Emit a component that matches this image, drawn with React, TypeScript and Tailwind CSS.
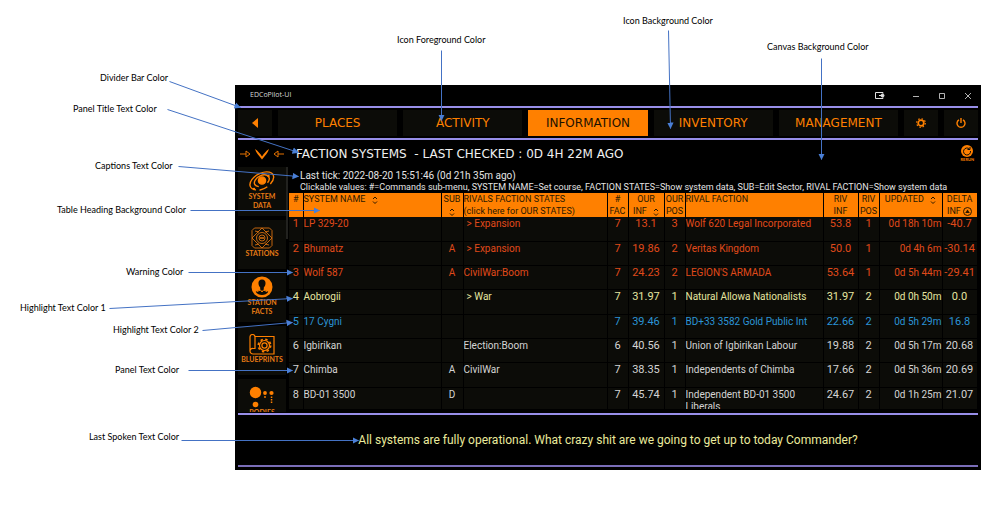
import type { ReactNode } from 'react'
import clsx from 'clsx'

type Tone = 'warning' | 'highlight1' | 'highlight2' | 'panel'

interface FactionSystem {
  name: string
  sub: string
  rivalState: string
  factions: number
  ourInf: string
  ourPos: number
  rival: string
  rivInf: string
  rivPos: number
  updated: string
  delta: string
  tone: Tone
}

const systems: FactionSystem[] = [
  { name: 'LP 329-20', sub: '', rivalState: '> Expansion', factions: 7, ourInf: '13.1', ourPos: 3, rival: 'Wolf 620 Legal Incorporated', rivInf: '53.8', rivPos: 1, updated: '0d 18h 10m', delta: '-40.7', tone: 'warning' },
  { name: 'Bhumatz', sub: 'A', rivalState: '> Expansion', factions: 7, ourInf: '19.86', ourPos: 2, rival: 'Veritas Kingdom', rivInf: '50.0', rivPos: 1, updated: '0d 4h 6m', delta: '-30.14', tone: 'warning' },
  { name: 'Wolf 587', sub: 'A', rivalState: 'CivilWar:Boom', factions: 7, ourInf: '24.23', ourPos: 2, rival: "LEGION'S ARMADA", rivInf: '53.64', rivPos: 1, updated: '0d 5h 44m', delta: '-29.41', tone: 'warning' },
  { name: 'Aobrogii', sub: '', rivalState: '> War', factions: 7, ourInf: '31.97', ourPos: 1, rival: 'Natural Allowa Nationalists', rivInf: '31.97', rivPos: 2, updated: '0d 0h 50m', delta: '0.0', tone: 'highlight1' },
  { name: '17 Cygni', sub: '', rivalState: '', factions: 7, ourInf: '39.46', ourPos: 1, rival: 'BD+33 3582 Gold Public Int', rivInf: '22.66', rivPos: 2, updated: '0d 5h 29m', delta: '16.8', tone: 'highlight2' },
  { name: 'Igbirikan', sub: '', rivalState: 'Election:Boom', factions: 6, ourInf: '40.56', ourPos: 1, rival: 'Union of Igbirikan Labour', rivInf: '19.88', rivPos: 2, updated: '0d 5h 17m', delta: '20.68', tone: 'panel' },
  { name: 'Chimba', sub: 'A', rivalState: 'CivilWar', factions: 7, ourInf: '38.35', ourPos: 1, rival: 'Independents of Chimba', rivInf: '17.66', rivPos: 2, updated: '0d 5h 36m', delta: '20.69', tone: 'panel' },
  { name: 'BD-01 3500', sub: 'D', rivalState: '', factions: 7, ourInf: '45.74', ourPos: 1, rival: 'Independent BD-01 3500 Liberals', rivInf: '24.67', rivPos: 2, updated: '0d 1h 25m', delta: '21.07', tone: 'panel' },
]

const toneClass: Record<Tone, string> = {
  warning: 'text-[#e04a1a]',
  highlight1: 'text-[#e6e6a0]',
  highlight2: 'text-[#2b94d6]',
  panel: 'text-[#d4d4d4]',
}

const columnClasses = [
  'w-[14px]',
  'w-[138px]',
  'w-[22px]',
  'w-[144px]',
  'w-[21px]',
  'w-[36px]',
  'w-[21px]',
  'w-[138px]',
  'w-[35px]',
  'w-[21px]',
  'w-[63px]',
  'w-[35px]',
]

const tabs = ['PLACES', 'ACTIVITY', 'INFORMATION', 'INVENTORY', 'MANAGEMENT']

// Callouts sit on a free canvas around the window
const callouts = [
  { text: 'Icon Foreground Color', place: 'left-[397px] top-[34px]', line: [441, 50, 441, 120] },
  { text: 'Icon Background Color', place: 'left-[623px] top-[15px]', line: [668, 30, 670, 128] },
  { text: 'Canvas Background Color', place: 'left-[767px] top-[41px]', line: [821, 58, 821, 159] },
  { text: 'Divider Bar Color', place: 'left-[100px] top-[72px]', line: [169, 81, 240, 107] },
  { text: 'Panel Title Text Color', place: 'left-[73px] top-[103px]', line: [167, 109, 298, 152] },
  { text: 'Captions Text Color', place: 'left-[95px] top-[160px]', line: [178, 166, 298, 176] },
  { text: 'Table Heading Background Color', place: 'left-[57px] top-[204px]', line: [190, 210, 319, 210] },
  { text: 'Warning Color', place: 'left-[126px] top-[266px]', line: [188, 272, 292, 272] },
  { text: 'Highlight Text Color 1', place: 'left-[20px] top-[302px]', line: [109, 308, 292, 298] },
  { text: 'Highlight Text Color 2', place: 'left-[113px] top-[324px]', line: [202, 330, 292, 322] },
  { text: 'Panel Text Color', place: 'left-[115px] top-[364px]', line: [188, 370, 292, 370] },
  { text: 'Last Spoken Text Color', place: 'left-[89px] top-[431px]', line: [181, 440, 358, 440] },
]

function SortIcon({ className }: { className?: string }) {
  return (
    <svg width="6" height="8" viewBox="0 0 6 8" className={clsx('inline-block', className)} aria-hidden="true">
      <path d="M1 3 3 1l2 2M1 5.5l2 2 2-2" fill="none" stroke="#2a1800" strokeWidth="1" />
    </svg>
  )
}

function SystemIcon() {
  return (
    <svg width="28" height="22" viewBox="0 0 28 22" fill="none" stroke="#ff8000" strokeWidth="1.4">
      <g transform="rotate(-28 14 11)">
        <path d="M4.500 16A12.800 7.600 0 1 1 20 17.500" />
        <path d="M8.500 14.500A8 5.200 0 1 1 18 15.200" />
        <path d="M7.500 18A12.800 7.600 0 0 0 16 18.600" />
      </g>
      <circle cx="14" cy="10.5" r="3.6" fill="#ff8000" />
      <circle cx="6" cy="19" r="1.200" fill="#ff8000" stroke="none" />
      <circle cx="20.500" cy="6" r="1.200" fill="#ff8000" stroke="none" />
    </svg>
  )
}

function StationsIcon() {
  return (
    <svg width="22" height="22" viewBox="0 0 22 22" fill="none" stroke="#d87010" strokeWidth="0.9">
      <path d="M3.500 1h15L21 3.500v15L18.500 21h-15L1 18.500v-15z" />
      <path d="M11 1 21 11 11 21 1 11z" />
      <path d="m4 4 4 1M18 4l-4 1M4 18l4-1M18 18l-4-1" />
      <circle cx="11" cy="11" r="5.500" />
      <circle cx="11" cy="11" r="3" />
      <path d="M9 11h4" strokeWidth="1.500" />
    </svg>
  )
}

function FactsIcon() {
  return (
    <svg width="22" height="22" viewBox="0 0 22 22">
      <circle cx="11" cy="11" r="10.5" fill="#ff8000" />
      <path d="M11 3.500c2.500 0 3.800 1.800 3.500 4.300-.2 1.800-.9 3-1.700 3.700v2.200l4.500 2c-1.500 2.200-3.600 3.300-6.300 3.300s-4.800-1.100-6.300-3.300l4.500-2v-2.200c-.8-.7-1.500-1.900-1.700-3.700C7.200 5.300 8.500 3.500 11 3.500z" fill="#0c0c08" />
      <path d="M6 15.500 9.500 14 11 16l1.500-2 3.500 1.500" fill="none" stroke="#ff8000" strokeWidth="1" />
    </svg>
  )
}

function BlueprintsIcon() {
  return (
    <svg width="26" height="21" viewBox="0 0 26 21" fill="none" stroke="#ff8000" strokeWidth="1.200">
      <path d="M6 2.500h19v17.500H4a3 3 0 0 1-3-3V3a2 2 0 0 1 5 0v11.500H4A2.500 2.500 0 0 0 1 17" />
      <circle cx="15.500" cy="11.500" r="2.600" />
      <circle cx="15.500" cy="11.500" r="5" />
      <circle cx="15.500" cy="11.500" r="6.200" strokeDasharray="2.400 2.470" strokeWidth="1.600" />
    </svg>
  )
}

function BodiesIcon() {
  return (
    <svg width="26" height="22" viewBox="0 0 26 22" fill="#ff8000">
      <circle cx="6.500" cy="6.500" r="5.700" />
      <circle cx="6.500" cy="18.500" r="2.800" />
      <circle cx="16" cy="7" r="1.900" />
      <circle cx="22.500" cy="7" r="2.100" />
      <circle cx="16" cy="11" r="0.900" />
      <path d="M21.800 10.500h1.500v1.500h-1.500zM21.800 13h1.500v1.500h-1.500zM21.800 15.500h1.500v1.500h-1.500z" />
    </svg>
  )
}

interface SideItem {
  label: string
  icon: ReactNode
}

const sideItems: SideItem[] = [
  { label: 'SYSTEM\nDATA', icon: <SystemIcon /> },
  { label: 'STATIONS', icon: <StationsIcon /> },
  { label: 'STATION\nFACTS', icon: <FactsIcon /> },
  { label: 'BLUEPRINTS', icon: <BlueprintsIcon /> },
  { label: 'BODIES', icon: <BodiesIcon /> },
]

function TitleBar() {
  return (
    <header className="flex h-[21px] items-center justify-between pr-[6px] pl-[15px]">
      <span className="font-['Open_Sans',sans-serif] text-[7px] text-[#d8d8d8]">EDCoPilot-UI</span>
      <div className="flex items-center text-[#e0e0e0]">
        <button aria-label="Dock" className="mr-7">
          <svg width="10" height="7" viewBox="0 0 10 7" fill="none" stroke="currentColor">
            <path d="M8 1.500V.5H.5v6H8v-1" />
            <path d="M4 3.500h3" />
            <circle cx="7.500" cy="3.500" r="1.500" fill="currentColor" />
          </svg>
        </button>
        <button aria-label="Minimize" className="mr-5">
          <svg width="6" height="6" viewBox="0 0 6 6" stroke="currentColor" strokeWidth=".8">
            <path d="M0 3.500h6" />
          </svg>
        </button>
        <button aria-label="Maximize" className="mr-5">
          <svg width="6" height="6" viewBox="0 0 6 6" fill="none" stroke="currentColor" strokeWidth=".8">
            <path d="M.5.5h5v5h-5z" />
          </svg>
        </button>
        <button aria-label="Close" className="pr-1">
          <svg width="6" height="6" viewBox="0 0 6 6" stroke="currentColor" strokeWidth=".8">
            <path d="m0 0 6 6M6 0 0 6" />
          </svg>
        </button>
      </div>
    </header>
  )
}

function NavBar() {
  const small = 'flex w-[34px] shrink-0 items-center justify-center bg-[#0c0c08]'
  return (
    <nav className="mx-[3px] flex h-[34px] gap-[6px] border-y-2 border-[#978ee8] py-[2px] text-[#ff8000]">
      <button aria-label="Back" className={small}>
        <svg width="6" height="10" viewBox="0 0 6 10" fill="currentColor">
          <path d="M6 0v10L0 5z" />
        </svg>
      </button>
      {tabs.map(tab => (
        <button
          key={tab}
          className={clsx(
            "flex-1 font-['DejaVu_Sans',sans-serif] text-[12px] leading-none",
            tab === 'INFORMATION' ? 'bg-[#ff8000] text-[#1c1000]' : 'bg-[#0c0c08]',
          )}
        >
          {tab}
        </button>
      ))}
      <button aria-label="Settings" className={small}>
        <svg width="10" height="10" viewBox="0 0 10 10" fill="none" stroke="currentColor">
          <circle cx="5" cy="5" r="2.800" strokeWidth="1.700" />
          <circle cx="5" cy="5" r="4.300" strokeWidth="1.200" strokeDasharray="1.500 1.877" />
        </svg>
      </button>
      <button aria-label="Power" className={small}>
        <svg width="10" height="10" viewBox="0 0 10 10" fill="none" stroke="currentColor" strokeWidth="1.400">
          <path d="M3 1.800a4 4 0 1 0 4 0M5 0v5" />
        </svg>
      </button>
    </nav>
  )
}

function Sidebar() {
  return (
    <aside className="flex w-12 shrink-0 flex-col gap-1 overflow-hidden">
      <button aria-label="Collapse menu" className="flex h-[23px] shrink-0 items-center justify-center pt-1">
        <svg width="46" height="12" viewBox="0 0 46 12" fill="none" stroke="#e67300">
          <path d="M1 6h6M7 3l4 3-4 3zM45 6h-6M39 3l-4 3 4 3z" />
          <path d="M16 1c3 2 5 4.500 7 7.500C25 5.500 27 3 30 1c-1 4-4 6.500-7 10.500C20 7.500 17 5 16 1z" fill="#ff8000" stroke="none" />
        </svg>
      </button>
      {sideItems.map(({ label, icon }) => (
        <button
          key={label}
          className="flex h-[49px] shrink-0 flex-col items-center justify-center bg-[#0c0c08] pb-1 font-['Lato',sans-serif] text-[7px] leading-[9px] font-bold whitespace-pre-line text-[#e67a14]"
        >
          {icon}
          <span className="text-center">{label}</span>
        </button>
      ))}
    </aside>
  )
}

function SystemsTable() {
  return (
    <table className="h-[221px] w-full table-fixed border-collapse text-[10px] leading-[12px]">
      <colgroup>
        {columnClasses.map((width, i) => (
          <col key={i} className={width} />
        ))}
      </colgroup>
      <thead>
        <tr className="h-6 bg-[#ff8000] align-top text-[9px] text-[#2a1800] [&>th]:border-r [&>th]:border-black [&>th]:p-0 [&>th]:font-normal [&>th]:whitespace-nowrap">
          <th>#</th>
          <th className="text-left">
            SYSTEM NAME <SortIcon className="ml-1" />
          </th>
          <th>
            SUB
            <br />
            <SortIcon />
          </th>
          <th className="text-left">
            RIVALS FACTION STATES
            <br />
            (click here for OUR STATES)
          </th>
          <th>
            #<br />
            FAC
          </th>
          <th>
            OUR
            <br />
            INF <SortIcon className="ml-1" />
          </th>
          <th>
            OUR
            <br />
            POS
          </th>
          <th className="text-left">RIVAL FACTION</th>
          <th>
            RIV
            <br />
            INF
          </th>
          <th>
            RIV
            <br />
            POS
          </th>
          <th>
            UPDATED <SortIcon className="ml-1" />
          </th>
          <th>
            DELTA
            <br />
            INF{' '}
            <svg width="9" height="9" viewBox="0 0 9 9" className="inline-block" aria-hidden="true">
              <circle cx="4.500" cy="4.500" r="4" fill="none" stroke="#2a1800" />
              <path d="M4.500 2.500 6.800 6H2.200z" fill="#2a1800" />
            </svg>
          </th>
        </tr>
      </thead>
      <tbody>
        {systems.map((s, i) => (
          <tr
            key={s.name}
            className={clsx(
              'h-6 bg-[#0c0c08] align-top [&>td]:border-r [&>td]:border-b [&>td]:border-black [&>td]:px-0 [&>td]:pt-px [&>td]:pb-0',
              toneClass[s.tone],
            )}
          >
            <td className="text-center text-[11px]">{i + 1}</td>
            <td>{s.name}</td>
            <td className="text-center">{s.sub}</td>
            <td>
              <span className={clsx(s.rivalState.startsWith('>') && 'pl-[3px]')}>{s.rivalState}</span>
            </td>
            <td className="text-center text-[11px]">{s.factions}</td>
            <td className="text-center text-[11px]">{s.ourInf}</td>
            <td className="text-center text-[11px]">{s.ourPos}</td>
            <td>{s.rival}</td>
            <td className="text-center text-[11px]">{s.rivInf}</td>
            <td className="text-center text-[11px]">{s.rivPos}</td>
            <td className="text-right whitespace-nowrap">{s.updated}</td>
            <td className="text-center text-[11px] whitespace-nowrap">{s.delta}</td>
          </tr>
        ))}
      </tbody>
    </table>
  )
}

function FactionPanel() {
  return (
    <section className="mb-[3px] ml-px min-w-0 flex-1 overflow-hidden">
      <div className="flex h-[30px] items-center justify-between pr-[3px] pb-[3px] pl-[7px]">
        <h1 className="font-['DejaVu_Sans',sans-serif] text-[12px] whitespace-pre text-[#f0f0f0]">
          {'FACTION SYSTEMS  - LAST CHECKED : 0D 4H 22M AGO'}
        </h1>
        <button className="flex flex-col items-center font-['Lato',sans-serif] text-[4px] leading-[5px] font-bold text-[#ff8000]">
          <svg width="12" height="12" viewBox="0 0 12 12">
            <circle cx="6" cy="6" r="6" fill="#ff8000" />
            <path d="M8.500 4A3.500 3.500 0 1 0 9.500 6M9 2v2.500H6.500" fill="none" stroke="#0c0c08" />
          </svg>
          RERUN
        </button>
      </div>
      <div className="pl-[11px] whitespace-nowrap text-[#e4e4e4]">
        <p className="text-[10px] leading-[12px]">Last tick: 2022-08-20 15:51:46 (0d 21h 35m ago)</p>
        <p className="text-[9px] leading-[11px]">
          Clickable values: #=Commands sub-menu, SYSTEM NAME=Set course, FACTION STATES=Show system data, SUB=Edit
          Sector, RIVAL FACTION=Show system data
        </p>
      </div>
      <SystemsTable />
    </section>
  )
}

function Callouts() {
  return (
    <div className="pointer-events-none absolute inset-0">
      <svg className="absolute inset-0 h-full w-full overflow-visible" stroke="#4472c4" strokeWidth="1">
        <defs>
          <marker id="arrow" markerUnits="userSpaceOnUse" markerWidth="8" markerHeight="8" refX="6" refY="4" orient="auto">
            <path d="M0 .8 6.500 4 0 7.200z" fill="#4a7fd6" stroke="none" />
          </marker>
        </defs>
        {callouts.map(({ text, line: [x1, y1, x2, y2] }) => (
          <line key={text} x1={x1 + 0.5} y1={y1 + 0.5} x2={x2 + 0.5} y2={y2 + 0.5} markerEnd="url(#arrow)" />
        ))}
      </svg>
      {callouts.map(({ text, place }) => (
        <span
          key={text}
          className={clsx("absolute font-['Lato',sans-serif] text-[9px] leading-[12px] whitespace-nowrap text-black", place)}
        >
          {text}
        </span>
      ))}
    </div>
  )
}

export default function App() {
  return (
    <main className="relative min-h-screen bg-white pt-[85px] pr-[19px] pb-[45px] pl-[235px]">
      <div className="bg-black pb-[3px] font-['Roboto',sans-serif]">
        <TitleBar />
        <NavBar />
        <div className="mx-[3px] flex h-[273px] border-b border-black pr-px">
          <Sidebar />
          {/* sidebar scroll thumb */}
          <div className="mt-[27px] h-[72px] w-[2px] bg-[#22221f]" />
          <FactionPanel />
        </div>
        <footer className="mx-[3px] flex h-[54px] items-center justify-center border-y-2 border-t-[#978ee8] border-b-[#7a6db8] text-[12px] text-[#eaea9c]">
          All systems are fully operational. What crazy shit are we going to get up to today Commander?
        </footer>
      </div>
      <Callouts />
    </main>
  )
}
